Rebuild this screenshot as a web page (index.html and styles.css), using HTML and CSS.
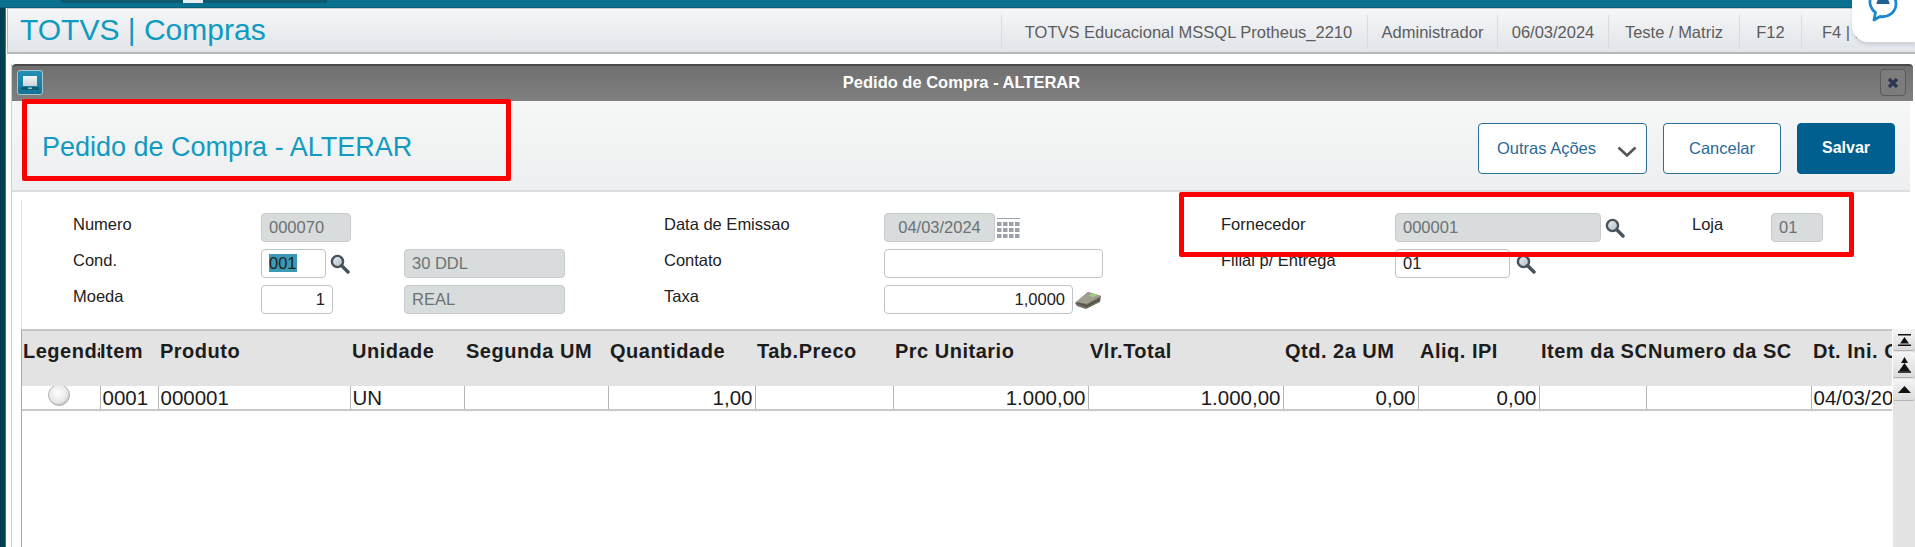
FILE: index.html
```html
<!DOCTYPE html>
<html lang="pt-BR">
<head>
<meta charset="utf-8">
<title>TOTVS | Compras</title>
<link rel="stylesheet" href="styles.css">
</head>
<body>
<svg class="sprites" width="0" height="0" aria-hidden="true">
  <defs>
    <linearGradient id="lens" x1="0" y1="0" x2="1" y2="1"><stop offset="0" stop-color="#eef2f4"/><stop offset="1" stop-color="#aeb8bf"/></linearGradient>
    <radialGradient id="ball" cx=".45" cy=".4" r=".65"><stop offset="0" stop-color="#ffffff"/><stop offset=".7" stop-color="#e6e6e6"/><stop offset="1" stop-color="#a9a9a9"/></radialGradient>
    <linearGradient id="screen" x1="0" y1="0" x2="0" y2="1"><stop offset="0" stop-color="#f4f6f6"/><stop offset="1" stop-color="#c9d3d6"/></linearGradient>
    <symbol id="search" viewBox="0 0 20 20">
      <circle cx="7.5" cy="7.5" r="5.6" fill="url(#lens)" stroke="#46525c" stroke-width="2.4"/>
      <path d="M11.8 11.8 18 18" stroke="#46525c" stroke-width="3.4" stroke-linecap="round"/>
    </symbol>
  </defs>
</svg>
<div class="page">
  <div class="topstrip"><span class="strip-dark"><span class="strip-notch"></span></span></div>
  <div class="shell">
    <div class="rail"></div>
    <main class="main">
      <header class="topbar">
        <div class="brand">TOTVS | Compras</div>
        <nav class="nav">
          <span class="nav-item nav-env">TOTVS Educacional MSSQL Protheus_2210</span>
          <span class="nav-item nav-user">Administrador</span>
          <span class="nav-item nav-date">06/03/2024</span>
          <span class="nav-item nav-branch">Teste / Matriz</span>
          <span class="nav-item nav-f12">F12</span>
          <span class="nav-item nav-f4">F4 | F</span>
        </nav>
      </header>

      <section class="window">
        <div class="titlebar">
          <span class="win-icon">
            <svg width="20" height="18" viewBox="0 0 20 18"><rect x="3" y="2" width="14" height="10" fill="url(#screen)"/><rect x="1" y="13" width="18" height="3" fill="#0b5d78"/><rect x="8" y="13.500" width="4" height="1.500" fill="#8fc4d6"/></svg>
          </span>
          <span class="win-title">Pedido de Compra - ALTERAR</span>
          <span class="win-close">
            <svg width="12" height="12" viewBox="0 0 12 12"><path d="M2 2l8 8M10 2l-8 8" stroke="#2d3550" stroke-width="3.2"/></svg>
          </span>
        </div>

        <div class="page-head">
          <h1 class="page-title">Pedido de Compra - ALTERAR</h1>
          <div class="actions">
            <button class="btn btn-menu" type="button">
              <span>Outras Ações</span>
              <svg class="chevron" width="20" height="11" viewBox="0 0 20 11"><path d="M1.5 1.5 10 9.5l8.5-8" fill="none" stroke="#555" stroke-width="2.6"/></svg>
            </button>
            <button class="btn btn-cancel" type="button">Cancelar</button>
            <button class="btn btn-save" type="button">Salvar</button>
          </div>
        </div>

        <div class="body">
          <form class="form">
            <div class="group group-a">
              <div class="row">
                <label class="label label-a">Numero</label>
                <div class="field off w-90">000070</div>
              </div>
              <div class="row">
                <label class="label label-a">Cond.</label>
                <div class="slot">
                  <div class="field w-65"><span class="selected">001</span></div>
                  <svg class="search" width="20" height="20"><use href="#search"/></svg>
                </div>
                <div class="field off w-161">30 DDL</div>
              </div>
              <div class="row">
                <label class="label label-a">Moeda</label>
                <div class="slot">
                  <div class="field num w-72">1</div>
                </div>
                <div class="field off w-161">REAL</div>
              </div>
            </div>

            <div class="group group-b">
              <div class="row">
                <label class="label label-b">Data de Emissao</label>
                <div class="field off centered w-111">04/03/2024</div>
                <svg class="calendar" width="23" height="20" viewBox="0 0 23 20" fill="#9aa1a8">
                  <rect width="23" height="1"/>
                  <rect y="4" width="4.5" height="4"/><rect x="6" y="4" width="4.5" height="4"/><rect x="12" y="4" width="4.5" height="4"/><rect x="18" y="4" width="4.5" height="4"/>
                  <rect y="10" width="4.5" height="4"/><rect x="6" y="10" width="4.5" height="4"/><rect x="12" y="10" width="4.5" height="4"/><rect x="18" y="10" width="4.5" height="4"/>
                  <rect y="16" width="4.5" height="4"/><rect x="6" y="16" width="4.5" height="4"/><rect x="12" y="16" width="4.5" height="4"/><rect x="18" y="16" width="4.5" height="4"/>
                </svg>
              </div>
              <div class="row">
                <label class="label label-b">Contato</label>
                <div class="field w-219"></div>
              </div>
              <div class="row">
                <label class="label label-b">Taxa</label>
                <div class="field num w-189">1,0000</div>
                <svg class="cash" width="28" height="20" viewBox="0 0 28 20">
                  <path d="M1 13 14 2l13 4-1 6-14 7-9-3z" fill="#6f6a5e"/>
                  <path d="M2 12 14 2l13 4-14 8z" fill="#a29d90"/>
                  <path d="M15 5.500l4-2.500 4 2-4 2.500z" fill="#9bd07c"/>
                  <path d="M4 13l9 3 13-7" fill="none" stroke="#4f4b41" stroke-width="1.200"/>
                </svg>
              </div>
            </div>

            <div class="group group-c">
              <div class="row">
                <label class="label label-c">Fornecedor</label>
                <div class="field off w-206">000001</div>
                <svg class="search" width="20" height="20"><use href="#search"/></svg>
                <label class="label label-loja">Loja</label>
                <div class="field off w-52">01</div>
              </div>
              <div class="row">
                <label class="label label-c">Filial p/ Entrega</label>
                <div class="field w-115">01</div>
                <svg class="search search-wide" width="20" height="20"><use href="#search"/></svg>
              </div>
            </div>
          </form>

          <div class="grid-wrap">
            <div class="grid">
              <table class="table">
                <colgroup>
                  <col class="c79"><col class="c58"><col class="c192"><col class="c114"><col class="c144"><col class="c147"><col class="c138"><col class="c195"><col class="c195"><col class="c135"><col class="c121"><col class="c107"><col class="c165"><col class="c81">
                </colgroup>
                <thead>
                  <tr>
                    <th>Legenda</th><th class="flush">Item</th><th>Produto</th><th>Unidade</th><th>Segunda UM</th><th>Quantidade</th><th>Tab.Preco</th><th>Prc Unitario</th><th>Vlr.Total</th><th>Qtd. 2a UM</th><th>Aliq. IPI</th><th>Item da SC</th><th>Numero da SC</th><th>Dt. Ini. C</th>
                  </tr>
                </thead>
                <tbody>
                  <tr>
                    <td class="legend"><svg width="24" height="24" viewBox="0 0 24 24"><circle cx="12" cy="12" r="10.5" fill="url(#ball)" stroke="#b5b5b5"/></svg></td>
                    <td>0001</td><td>000001</td><td>UN</td><td></td><td class="right">1,00</td><td></td><td class="right">1.000,00</td><td class="right">1.000,00</td><td class="right">0,00</td><td class="right">0,00</td><td></td><td></td><td>04/03/2024</td>
                  </tr>
                </tbody>
              </table>
            </div>
            <div class="scroll">
              <button class="scroll-btn" type="button" aria-label="Início"><svg width="13" height="12" viewBox="0 0 13 12"><path d="M0 .8h13M0 11.2h13" stroke="#111" stroke-width="1.6"/><path d="M6.5 3 11 9.5H2z" fill="#111"/></svg></button>
              <button class="scroll-btn scroll-btn-mid" type="button" aria-label="Página anterior"><svg width="13" height="16" viewBox="0 0 13 16"><path d="M6.500 0 10 6H3zM6.500 6 12 14H1z" fill="#111"/><path d="M0 15h13" stroke="#111" stroke-width="1.6"/></svg></button>
              <button class="scroll-btn" type="button" aria-label="Linha anterior"><svg width="13" height="8" viewBox="0 0 13 8"><path d="M6.500 0 13 7H0z" fill="#111"/></svg></button>
            </div>
          </div>
        </div>
      </section>
    </main>
  </div>

  <div class="markup markup-title"></div>
  <div class="markup markup-vendor"></div>

  <aside class="chat">
    <svg width="32" height="26" viewBox="0 0 32 26">
      <circle cx="15" cy="4" r="6.500" fill="#1f5f96"/>
      <path d="M8 4h14a7 7 0 0 1-14 0z" fill="#fff"/>
      <path d="M2.500 -2a13 13 0 0 0 5 14.500L6 20l6-3.500C20 18 28 12 28 4c0-2-.4-4-1-6" fill="none" stroke="#1c87cc" stroke-width="2.800" stroke-linejoin="round"/>
    </svg>
  </aside>
</div>
</body>
</html>
```

FILE: styles.css
```css
* { box-sizing: border-box; }
html, body { margin: 0; padding: 0; height: 100%; overflow: hidden; background: #fff; }
body { font-family: "Liberation Sans", Arial, sans-serif; font-size: 16.5px; color: #222; }
.sprites { position: absolute; }

.page { position: relative; width: 1915px; height: 547px; overflow: hidden; display: flex; flex-direction: column; }

.topstrip { height: 8px; flex: none; background: #0a7090; border-bottom: 1px solid #0a5f78; padding-left: 61px; }
.strip-dark { display: block; width: 266px; height: 3px; background: #0b5a70; padding-left: 122px; }
.strip-notch { display: block; width: 20px; height: 3px; background: #e8eef0; }

.shell { flex: 1; display: flex; min-height: 0; }
.rail { width: 6px; flex: none; background: #003f50; border-right: 1px solid #0b87a8; }
.main { flex: 1; min-width: 0; display: flex; flex-direction: column; padding-left: 1px; }

.topbar { height: 46px; flex: none; display: flex; align-items: stretch; background: linear-gradient(#f5f6f8, #e1e5e9); border-top: 1px solid #c8ccd0; border-bottom: 2px solid #b4b8bb; border-left: 1px solid #b4b8bb; }
.brand { flex: 1; padding-left: 12px; font-size: 30px; line-height: 42px; color: #0f9ac0; }
.nav { width: 914px; flex: none; display: flex; align-items: center; color: #5c5c5c; font-size: 16.500px; }
.nav-item { height: 34px; line-height: 34px; border-left: 1px solid #d9dcdf; white-space: nowrap; text-align: center; flex: none; margin-top: 2px; }
.nav-env { width: 366px; padding-left: 8px; }
.nav-user { width: 130px; }
.nav-date { width: 111px; }
.nav-branch { width: 131px; }
.nav-f12 { width: 62px; }
.nav-f4 { width: 114px; text-align: left; padding-left: 20px; }

.window { flex: 1; min-height: 0; margin: 10px 0 0 4px; display: flex; flex-direction: column; border-left: 1px solid #cfd2d4; }
.titlebar { height: 37px; flex: none; margin-right: 2px; display: flex; align-items: center; justify-content: space-between; padding: 0 7px 2px 5px; background: linear-gradient(#6f6f6f, #808080); border-top: 2px solid #4a4a4a; border-radius: 4px 4px 0 0; }
.win-icon { width: 26px; height: 25px; display: flex; align-items: center; justify-content: center; background: linear-gradient(#2490b5, #147495); border: 1px solid #a8c4cf; border-radius: 3px; }
.win-title { color: #fff; font-weight: 700; font-size: 16.500px; }
.win-close { width: 26px; height: 27px; display: flex; align-items: center; justify-content: center; background: #7c7c7c; border: 1px solid #5b5b5b; border-radius: 4px; }

.page-head { height: 91px; flex: none; margin-right: 5px; display: flex; align-items: center; justify-content: space-between; padding: 5px 15px 0 30px; background: linear-gradient(#f6f7f7, #edeff0); border-bottom: 2px solid #dcdfe1; }
.page-title { margin: -2px 0 0; font-weight: 400; font-size: 27px; color: #129ac0; }
.actions { display: flex; }
.btn { height: 51px; font: 16.500px "Liberation Sans", Arial, sans-serif; color: #2a6a96; background: #fff; border: 1px solid #2b6e96; border-radius: 4px; padding: 0; }
.btn-menu { width: 169px; display: flex; align-items: center; padding: 0 9px 0 18px; justify-content: space-between; }
.chevron { margin-top: 6px; }
.btn-cancel { width: 118px; margin-left: 16px; }
.btn-save { width: 98px; margin-left: 16px; background: #005f8f; border-color: #005f8f; color: #fff; font-weight: 700; font-size: 16px; }

.body { flex: 1; min-height: 0; padding: 8px 0 0 9px; display: flex; flex-direction: column; }
.form { flex: none; display: flex; padding: 13px 0 15px 51px; border-left: 1px solid #dfe1e2; }
.group { display: flex; flex-direction: column; gap: 7px; }
.group-a { width: 591px; }
.group-b { width: 557px; }
.group-c { flex: 1; }
.row { display: flex; align-items: center; height: 29px; }
.label { display: block; flex: none; margin-top: -6px; color: #222; white-space: nowrap; }
.label-a { width: 188px; }
.label-b { width: 220px; }
.label-c { width: 174px; }
.label-loja { width: 79px; margin-left: 67px; }
.slot { width: 143px; flex: none; display: flex; align-items: center; }

.field { height: 29px; line-height: 27px; flex: none; padding: 0 7px; background: #fff; border: 1px solid #bfc4c6; border-radius: 4px; color: #222; white-space: nowrap; }
.off { background: #d9dcdc; color: #6c7273; border-color: #c7cbcb; }
.num { text-align: right; }
.centered { text-align: center; padding-left: 0; padding-right: 0; }
.selected { background: #3a9ab5; display: inline-block; line-height: 18px; }
.w-52 { width: 52px; }
.w-65 { width: 65px; }
.w-72 { width: 72px; }
.w-90 { width: 90px; }
.w-111 { width: 111px; }
.w-115 { width: 115px; }
.w-161 { width: 161px; }
.w-189 { width: 189px; }
.w-206 { width: 206px; }
.w-219 { width: 219px; }
.search { flex: none; margin-left: 4px; }
.search-wide { margin-left: 6px; }
.calendar { flex: none; margin: 0 0 0 2px; }
.cash { flex: none; margin-left: 1px; }

.grid-wrap { flex: 1; min-height: 0; display: flex; }
.grid { width: 1871px; flex: none; border-left: 1px solid #a8a8a8; border-top: 2px solid #c6c6c6; overflow: hidden; }
.table { width: 1871px; table-layout: fixed; border-collapse: collapse; margin-left: -1px; font-size: 20.500px; }
.c58 { width: 58px; } .c79 { width: 79px; } .c81 { width: 81px; } .c107 { width: 107px; }
.c114 { width: 114px; } .c121 { width: 121px; } .c135 { width: 135px; } .c138 { width: 138px; }
.c144 { width: 144px; } .c147 { width: 147px; } .c165 { width: 165px; } .c192 { width: 192px; } .c195 { width: 195px; }
th { height: 55px; padding: 8px 0 0 2px; vertical-align: top; text-align: left; background: #e3e3e3; font-weight: 700; font-size: 20px; line-height: 24px; color: #1c1c1c; letter-spacing: .5px; white-space: nowrap; overflow: hidden; }
th.flush { padding-left: 0; }
td { height: 23px; padding: 1px 2px 0; line-height: 22px; border-left: 1px solid #b5b5b5; border-bottom: 2px solid #c8c8c8; white-space: nowrap; overflow: hidden; color: #1c1c1c; }
td.legend { border-left: 0; padding: 0; text-align: center; }
.legend svg { display: block; margin: -4px 0 1px 26px; }
td.right { text-align: right; }
.scroll { flex: 1; margin-left: 1px; background: #e3e3e3; display: flex; flex-direction: column; gap: 1px; }
.scroll-btn { height: 22px; padding: 0; display: flex; align-items: center; justify-content: center; background: linear-gradient(#f5f5f5, #dcdcdc); border: 0; border-bottom: 1px solid #b3b3b3; border-radius: 3px; }
.scroll-btn-mid { height: 26px; }

.markup { position: absolute; border: 5px solid #fe0000; border-radius: 2px; }
.markup-title { left: 22px; top: 99px; width: 489px; height: 82px; }
.markup-vendor { left: 1179px; top: 192px; width: 675px; height: 65px; }

.chat { position: absolute; right: 0; top: 0; width: 63px; height: 42px; padding: 0 0 0 16px; background: #fff; border-radius: 0 0 0 16px; box-shadow: 0 3px 3px rgba(120,130,140,.2); }
.chat svg { display: block; }
```
